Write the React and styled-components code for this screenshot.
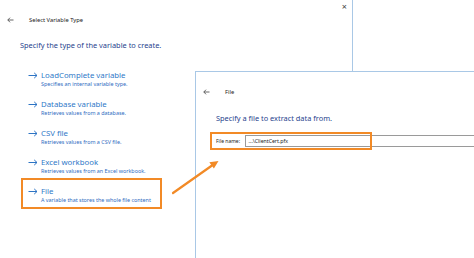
import React from 'react';
import styled, { createGlobalStyle } from 'styled-components';

const Global = createGlobalStyle`
  html, body { margin: 0; padding: 0; background: #fff; }
  body { font-family: "Noto Sans", "Open Sans", sans-serif; -webkit-font-smoothing: antialiased; }
`;

const Desktop = styled.div`
  position: relative;
  width: 474px;
  height: 258px;
  overflow: hidden;
  background: #fff;
`;

const Window = styled.section`
  position: absolute;
  left: ${p => p.$x}px;
  top: ${p => p.$y}px;
  width: ${p => p.$w}px;
  height: ${p => p.$h}px;
  box-sizing: border-box;
  background: #fff;
  border-style: solid;
  border-color: #a9c8e6;
  border-width: ${p => p.$borders};
  display: flex;
  flex-direction: column;
  overflow: hidden;
`;

const Close = styled.span`
  position: absolute;
  top: 1px;
  right: 5px;
  font-size: 9px;
  line-height: 12px;
  color: #444;
`;

const TitleBar = styled.div`
  display: flex;
  align-items: center;
  height: 14px;
  margin-top: 13px;
  padding-left: 7px;
`;

const BackButton = styled.span`
  display: flex;
  align-items: center;
  width: 22px;
  height: 14px;
`;

const Title = styled.span`
  font-size: 5.8px;
  color: #1a1a1a;
  line-height: 14px;
`;

const Heading = styled.h1`
  margin: ${p => p.$gap}px 0 0 20px;
  font-size: 7.4px;
  font-weight: 400;
  line-height: 12px;
  color: #28448e;
`;

const List = styled.div`
  display: flex;
  flex-direction: column;
  margin: 11px 0 0 21px;
`;

const Item = styled.div`
  width: 141px;
  height: 31px;
  box-sizing: border-box;
  margin-bottom: -2px;
  border: 2px solid ${p => (p.$selected ? '#f28a26' : 'transparent')};
  padding: 6px 0 0 5px;
  display: grid;
  grid-template-columns: 13px 1fr;
  grid-template-rows: 10px 8px;
`;

const ItemArrow = styled.svg`
  align-self: center;
`;

const ItemLabel = styled.span`
  font-size: 7.8px;
  line-height: 10px;
  color: #3079c8;
  white-space: nowrap;
`;

const ItemDesc = styled.span`
  grid-column: 2;
  font-size: 5.4px;
  line-height: 8px;
  color: #2f6cbf;
  white-space: nowrap;
`;

const FieldRow = styled.div`
  display: flex;
  align-items: center;
  margin: 11px 0 0 20px;
  height: 12px;
`;

const FieldLabel = styled.span`
  width: 31px;
  font-size: 5px;
  color: #222;
  white-space: nowrap;
`;

const Input = styled.div`
  width: 260px;
  height: 12px;
  box-sizing: border-box;
  border: 1px solid #9a9a9a;
  padding-left: 3px;
  font-size: 5.2px;
  line-height: 10px;
  color: #1a1a1a;
  white-space: nowrap;
`;

const Callout = styled.div`
  position: absolute;
  left: ${p => p.$x}px;
  top: ${p => p.$y}px;
  width: ${p => p.$w}px;
  height: ${p => p.$h}px;
  box-sizing: border-box;
  border: 2px solid #f28a26;
  pointer-events: none;
`;

const Overlay = styled.svg`
  position: absolute;
  left: 0;
  top: 0;
  pointer-events: none;
`;

const Back = () => (
  <svg width="7" height="6" viewBox="0 0 7 6">
    <path d="M6.5 3H0.8M3 0.7L0.8 3L3 5.3" fill="none" stroke="#555" strokeWidth="0.9" />
  </svg>
);

const items = [
  { label: 'LoadComplete variable', desc: 'Specifies an internal variable type.' },
  { label: 'Database variable', desc: 'Retrieves values from a database.' },
  { label: 'CSV file', desc: 'Retrieves values from a CSV file.' },
  { label: 'Excel workbook', desc: 'Retrieves values from an Excel workbook.' },
  { label: 'File', desc: 'A variable that stores the whole file content', selected: true },
];

export default function App() {
  return (
    <>
      <Global />
      <Desktop>
        <Window $x={0} $y={0} $w={353} $h={258} $borders="0 1px 0 0">
          <Close>×</Close>
          <TitleBar>
            <BackButton><Back /></BackButton>
            <Title>Select Variable Type</Title>
          </TitleBar>
          <Heading $gap={12}>Specify the type of the variable to create.</Heading>
          <List>
            {items.map(it => (
              <Item key={it.label} $selected={it.selected}>
                <ItemArrow width="10" height="7" viewBox="0 0 10 7">
                  <path d="M0.5 3.5H9M6.2 0.9L9 3.5L6.2 6.1" fill="none" stroke="#2d74c4" strokeWidth="1" />
                </ItemArrow>
                <ItemLabel>{it.label}</ItemLabel>
                <ItemDesc>{it.desc}</ItemDesc>
              </Item>
            ))}
          </List>
        </Window>

        <Window $x={195} $y={71} $w={290} $h={200} $borders="1px 0 0 1px">
          <TitleBar>
            <BackButton><Back /></BackButton>
            <Title>File</Title>
          </TitleBar>
          <Heading $gap={13}>Specify a file to extract data from.</Heading>
          <FieldRow>
            <FieldLabel>File name:</FieldLabel>
            <Input>...\ClientCert.pfx</Input>
          </FieldRow>
          <Callout $x={14} $y={60} $w={162} $h={18} />
        </Window>

        <Overlay width="474" height="258" viewBox="0 0 474 258">
          <line x1="173" y1="193" x2="212" y2="165.5" stroke="#f28a26" strokeWidth="2.2" strokeLinecap="round" />
          <polygon points="218.5,161 213.9,168.6 209.3,162.2" fill="#f28a26" />
        </Overlay>
      </Desktop>
    </>
  );
}
